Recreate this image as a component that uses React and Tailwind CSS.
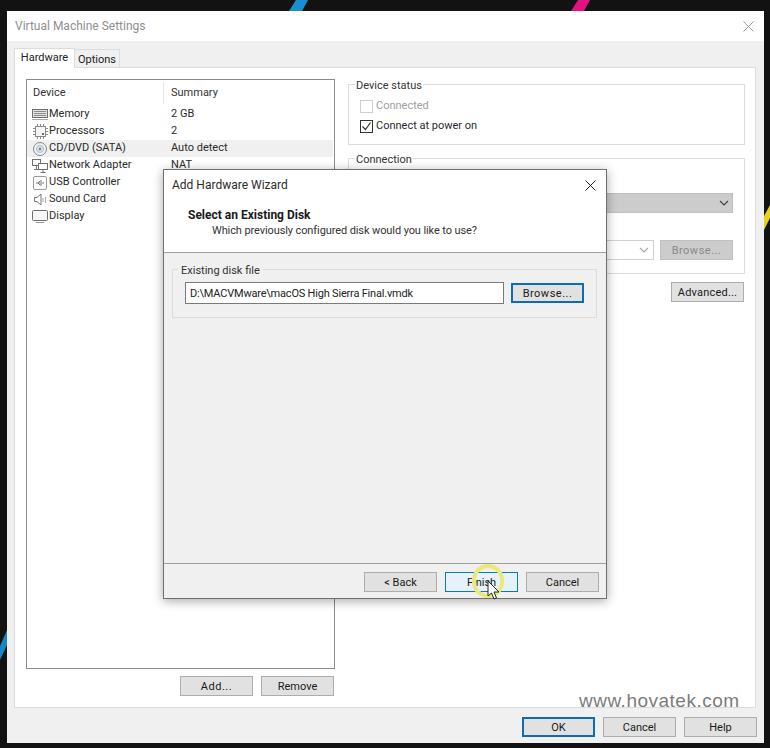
const uiFont = "font-['Roboto',sans-serif]";

function CloseIcon({ className, size = 11 }) {
  return (
    <svg width={size} height={size} viewBox="0 0 11 11" className={className} fill="none" stroke="currentColor" strokeWidth="1">
      <path d="M0.5 0.5 L10.5 10.5 M10.5 0.5 L0.5 10.5" />
    </svg>
  );
}

function Chevron({ className }) {
  return (
    <svg width="10" height="6" viewBox="0 0 10 6" className={className} fill="none" stroke="currentColor" strokeWidth="1.2">
      <path d="M1 1 L5 5 L9 1" />
    </svg>
  );
}

const icons = {
  memory: (
    <g stroke="#6d6d6d" fill="none">
      <rect x="0.5" y="2.5" width="15" height="8" fill="#e4e4e4" />
      <path d="M2 4.5h12M2 6.5h12M2 8.5h12" stroke="#8a8a8a" />
      <path d="M0 12.5h16" stroke="#a8a8a8" />
    </g>
  ),
  cpu: (
    <g stroke="#8a8a8a" fill="none">
      <rect x="3.5" y="2.5" width="10" height="10" fill="#f4f4f4" />
      <path d="M5.5 0v2M8.5 0v2M11.5 0v2M5.5 13v2M8.5 13v2M11.5 13v2M1 4.5h2M1 7.5h2M1 10.5h2M14 4.5h2M14 7.5h2M14 10.5h2" />
      <rect x="10" y="9" width="2" height="2" fill="#6d6d6d" stroke="none" />
    </g>
  ),
  disc: (
    <g fill="none">
      <circle cx="8" cy="8" r="6.5" stroke="#7f8a94" fill="#eef2f5" />
      <circle cx="8" cy="8" r="3.5" stroke="#b4c0ca" fill="#d8e0e6" />
      <circle cx="8" cy="8" r="1.3" fill="#7f8a94" />
    </g>
  ),
  network: (
    <g stroke="#707070" fill="#fff">
      <rect x="0.5" y="1.5" width="8" height="6" />
      <rect x="6.5" y="5.5" width="9" height="6" />
      <path d="M4.5 7.5v4M2 11.5h5M11 11.5v3M8.5 14.5h5" fill="none" />
    </g>
  ),
  usb: (
    <g fill="none">
      <rect x="1.5" y="1.5" width="13" height="13" rx="1.5" stroke="#9a9a9a" fill="#fbfbfb" />
      <path d="M4 8h8M6 8l2-2h2M6 8l2 2h2" stroke="#7a7a7a" />
    </g>
  ),
  sound: (
    <g fill="none" stroke="#777">
      <path d="M2.5 5.5h2.5l4-3.5v11l-4-3.5h-2.5z" />
      <path d="M11 6v4M13.5 5v6" stroke="#aaa" />
    </g>
  ),
  display: (
    <g fill="none" stroke="#6d6d6d">
      <rect x="0.5" y="1.5" width="15" height="10" rx="1" fill="#f8f8f8" />
      <path d="M4 13.5h8" stroke="#999" />
    </g>
  ),
};

const devices = [
  { name: 'Memory', summary: '2 GB', icon: 'memory' },
  { name: 'Processors', summary: '2', icon: 'cpu' },
  { name: 'CD/DVD (SATA)', summary: 'Auto detect', icon: 'disc', selected: true },
  { name: 'Network Adapter', summary: 'NAT', icon: 'network' },
  { name: 'USB Controller', summary: '', icon: 'usb' },
  { name: 'Sound Card', summary: '', icon: 'sound' },
  { name: 'Display', summary: '', icon: 'display' },
];

function WinButton({ children, variant = 'normal', className = '' }) {
  const styles = {
    normal: 'bg-[#e1e1e1] border border-[#adadad] text-[#1a1a1a]',
    focused: 'bg-[#e1e1e1] border-2 border-[#0f6cb4] text-[#1a1a1a]',
    hover: 'bg-[#e5f1fb] border border-[#0f78b8] text-[#1a1a1a]',
    disabled: 'bg-[#cccccc] border border-[#bfbfbf] text-[#8a8a8a]',
  };
  return (
    <button type="button" className={`w-[73px] h-[20px] shrink-0 flex items-center justify-center text-[11px] leading-none ${styles[variant]} ${className}`}>
      {children}
    </button>
  );
}

function DeviceList() {
  return (
    <div className="w-[309px] h-[590px] border border-[#8c8c8c] bg-white">
      <div className="flex h-[26px] items-center text-[#333]">
        <div className="w-[137px] h-[22px] pl-[6px] border-r border-[#e4e4e4] flex items-center">Device</div>
        <div className="pl-[7px]">Summary</div>
      </div>
      <div className="mr-px">
        {devices.map((d) => (
          <div key={d.name} className={`flex h-[17px] items-center text-[#2b2b2b] ${d.selected ? 'bg-[#f0f0f0]' : ''}`}>
            <svg width="16" height="16" viewBox="0 0 16 16" className="ml-[5px] shrink-0">{icons[d.icon]}</svg>
            <span className="w-[122px] ml-px whitespace-nowrap">{d.name}</span>
            <span>{d.summary}</span>
          </div>
        ))}
      </div>
    </div>
  );
}

function RightPanel() {
  return (
    <div className="w-[397px] flex flex-col">
      <fieldset className="h-[66px] border border-[#dcdcdc] pl-[11px]">
        <legend className="-ml-[5px] px-px text-[#333] leading-[10px] translate-y-[2px]">Device status</legend>
        <label className="flex items-center h-[20px] mt-[7px] text-[#a0a0a0]">
          <span className="w-[13px] h-[13px] border border-[#cfcfcf] bg-white mr-[3px]" />
          Connected
        </label>
        <label className="flex items-center h-[20px] text-[#2b2b2b]">
          <span className="w-[13px] h-[13px] border border-[#333] bg-white mr-[3px] flex items-center justify-center">
            <svg width="11" height="11" viewBox="0 0 11 11" fill="none" stroke="#333" strokeWidth="1.2">
              <path d="M1.5 5.5 L4.5 8.5 L9.5 1.5" />
            </svg>
          </span>
          Connect at power on
        </label>
      </fieldset>
      <fieldset className="mt-[8px] h-[121px] border border-[#dcdcdc] pl-[11px] pr-[11px]">
        <legend className="-ml-[5px] px-px text-[#333] leading-[10px] translate-y-[2px]">Connection</legend>
        <div className="mt-[30px] h-[20px] bg-[#cccccc] border border-[#bfbfbf] flex items-center justify-end pr-[3px] text-[#444]">
          <Chevron />
        </div>
        <div className="mt-[27px] flex items-center gap-[6px]">
          <div className="flex-1 h-[20px] bg-white border border-[#d0d0d0] flex items-center justify-end pr-[4px] text-[#a8a8a8]">
            <Chevron />
          </div>
          <WinButton variant="disabled" className="tracking-[0.5px]">Browse...</WinButton>
        </div>
      </fieldset>
      <div className="mt-[8px] flex justify-end pr-px">
        <WinButton className="tracking-[0.2px]">Advanced...</WinButton>
      </div>
    </div>
  );
}

function Wizard() {
  return (
    <div className="absolute left-[163px] top-[169px] w-[444px] h-[430px] flex flex-col bg-[#f0f0f0] border border-[#6f6f6f] shadow-[0_2px_10px_rgba(0,0,0,0.35)]">
      <div className="bg-white h-[83px] border-b border-[#a0a0a0] shrink-0">
        <div className="flex items-center justify-between h-[30px] pl-[8px] pr-[10px] text-[#2b2b2b]">
          <span className="text-[12px]">Add Hardware Wizard</span>
          <CloseIcon className="text-[#222]" />
        </div>
        <div className="pl-[24px] mt-[7px] text-[12px] font-bold text-[#1a1a1a] leading-[16px]">Select an Existing Disk</div>
        <div className="pl-[48px] text-[#333] leading-[16px] tracking-[-0.1px]">Which previously configured disk would you like to use?</div>
      </div>
      <div className="flex-1 px-[8px] pt-[11px]">
        <fieldset className="w-[425px] h-[54px] border border-[#dcdcdc] pl-[12px]">
          <legend className="-ml-[7px] px-[3px] text-[#333] leading-[10px] translate-y-[2px]">Existing disk file</legend>
          <div className="flex items-center gap-[7px] mt-[8px]">
            <div className="w-[319px] h-[22px] bg-white border border-[#7a7a7a] pl-[4px] pt-[2px] flex items-center text-[#222] whitespace-nowrap tracking-[-0.2px]">D:\MACVMware\macOS High Sierra Final.vmdk</div>
            <WinButton variant="focused" className="tracking-[0.5px]">Browse...</WinButton>
          </div>
        </fieldset>
      </div>
      <div className="h-[35px] border-t border-[#a0a0a0] flex items-start pt-[8px] justify-end gap-[8px] pr-[7px] shrink-0">
        <WinButton>&lt; Back</WinButton>
        <WinButton variant="hover">Finish</WinButton>
        <WinButton>Cancel</WinButton>
      </div>
    </div>
  );
}

export default function App() {
  return (
    <div className={`relative w-[770px] h-[748px] overflow-hidden bg-[#121212] pt-[11px] pl-[7px] text-[11px] ${uiFont}`}>
      {/* wallpaper showing around the window */}
      <svg width="770" height="748" className="absolute left-0 top-0">
        <polygon points="296,0 308,0 302,11 289,11" fill="#1a8fd0" />
        <polygon points="578,0 590,0 584,11 571,11" fill="#e0147f" />
        <polygon points="770,205 770,218 764,230 764,216" fill="#e6d21e" />
        <polygon points="7,630 7,645 0,660 0,646" fill="#1585c4" />
      </svg>

      <div className="relative w-[757px] h-[732px] flex flex-col bg-[#f0f0f0]">
        <div className="h-[30px] bg-white flex items-center justify-between pl-[8px] pr-[10px] text-[#8f8f8f] shrink-0">
          <span className="text-[12px]">Virtual Machine Settings</span>
          <CloseIcon className="text-[#9a9a9a]" />
        </div>
        <div className="flex items-end h-[26px] pl-[7px] shrink-0 relative z-10">
          <div className="w-[61px] h-[20px] bg-white border border-b-0 border-[#dcdcdc] flex items-center justify-center text-[#222] -mb-px">Hardware</div>
          <div className="w-[45px] h-[18px] pt-[3px] bg-[#f0f0f0] border border-b-0 border-l-0 border-[#dcdcdc] flex items-center justify-center text-[#222]">Options</div>
        </div>
        <div className="mx-[7px] w-[742px] h-[641px] border border-[#dcdcdc] bg-white flex gap-[13px] pl-[11px] pt-[11px] shrink-0">
          <div className="flex flex-col">
            <DeviceList />
            <div className="mt-[7px] flex justify-end gap-[8px] pr-px">
              <WinButton className="tracking-[0.5px]">Add...</WinButton>
              <WinButton>Remove</WinButton>
            </div>
          </div>
          <RightPanel />
        </div>
        <div className="flex justify-end gap-[8px] pr-[7px] pt-[9px]">
          <WinButton variant="focused">OK</WinButton>
          <WinButton>Cancel</WinButton>
          <WinButton>Help</WinButton>
        </div>
      </div>

      <Wizard />

      {/* watermark */}
      <div className="absolute left-[579px] top-[690px] text-[19px] leading-[22px] tracking-[0.5px] text-[#7c7c7c] font-['Liberation_Sans',sans-serif]">www.hovatek.com</div>

      {/* mouse highlight and cursor */}
      <div className="absolute left-[472px] top-[564px] w-[32px] h-[34px] rounded-full border-4 border-[#ece97a]" />
      <svg width="14" height="21" viewBox="0 0 14 21" className="absolute left-[487px] top-[580px]">
        <path d="M1 1 L1 16 L4.5 13 L7 19 L9.5 18 L7 12 L12 12 Z" fill="#fff" stroke="#222" strokeWidth="1" />
      </svg>
    </div>
  );
}
